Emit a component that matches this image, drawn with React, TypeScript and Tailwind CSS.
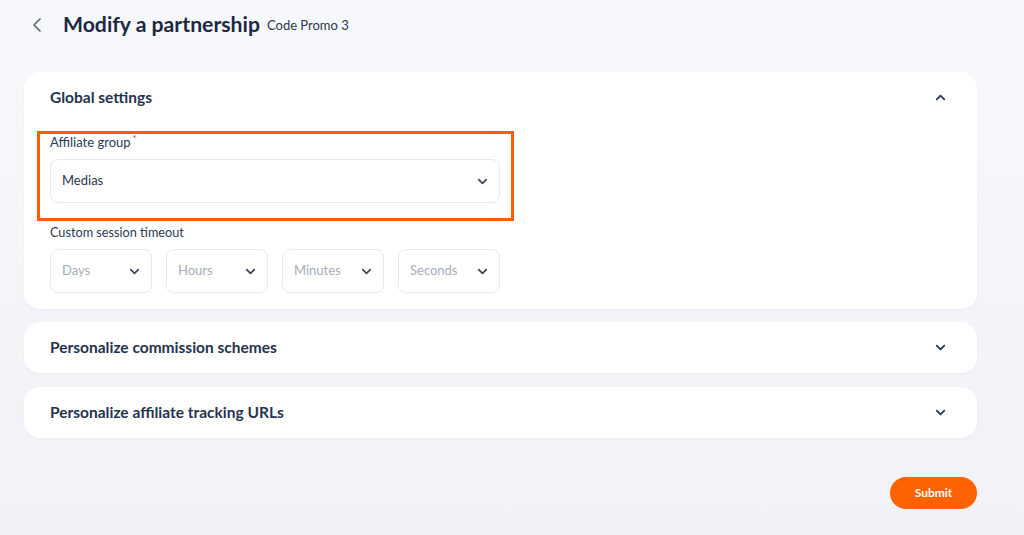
import { ChevronDown, ChevronLeft, ChevronUp } from "lucide-react";

const units = ["Days", "Hours", "Minutes", "Seconds"];

function CollapsedCard({ title }: { title: string }) {
  return (
    <div className="flex h-[51px] items-center justify-between rounded-2xl bg-white pl-[26px] pr-[29px] shadow-[0_1px_3px_rgba(30,42,70,0.04)]">
      <h2 className="text-[15.5px] font-bold text-[#25334d]">{title}</h2>
      <ChevronDown className="h-[15px] w-[15px] text-[#2d3b52]" strokeWidth={3} />
    </div>
  );
}

export default function App() {
  return (
    <div
      className="min-h-[535px] w-full bg-[linear-gradient(180deg,#f7f8fb_0%,#f0f2f7_100%)] text-[#25334d]"
      style={{ fontFamily: "Lato, 'Open Sans', sans-serif" }}
    >
      <div className="w-[953px] pl-[24px] box-content">
        {/* header */}
        <div className="flex h-[48px] items-center pt-[1px]">
          <ChevronLeft className="ml-[1px] h-[24px] w-[24px] text-[#5b6577]" strokeWidth={1.75} />
          <h1 className="ml-[14px] text-[21.2px] font-bold text-[#1c2844]">
            Modify a partnership
          </h1>
          <span className="ml-[7px] mt-[3px] text-[13px] text-[#2b3750]">Code Promo 3</span>
        </div>

        {/* global settings */}
        <div className="mt-[24px] rounded-2xl bg-white shadow-[0_1px_3px_rgba(30,42,70,0.04)]">
          <div className="flex h-[51px] items-center justify-between pl-[26px] pr-[29px]">
            <h2 className="text-[15.5px] font-bold text-[#25334d]">Global settings</h2>
            <ChevronUp className="h-[15px] w-[15px] text-[#2d3b52]" strokeWidth={3} />
          </div>

          <div className="relative px-[26px] pb-[16px] pt-[11px]">
            <div className="absolute left-[13px] top-[8px] h-[90px] w-[477px] border-[3px] border-[#ff5a0a]" />

            <label className="flex text-[13px] leading-[16px] text-[#2b3a55]">
              Affiliate group
              <span className="ml-[2px] -mt-[4px] text-[10px] text-[#e0313b]">*</span>
            </label>
            <div className="mt-[9px] flex h-[44px] w-[450px] items-center justify-between rounded-lg border border-[#e6e9ee] bg-white pl-[11px] pr-[9px]">
              <span className="text-[13px] text-[#2b3750]">Medias</span>
              <ChevronDown className="h-[15px] w-[15px] text-[#3a4558]" strokeWidth={2.75} />
            </div>

            <div className="mt-[21px] text-[12.7px] leading-[16px] text-[#2b3a55]">
              Custom session timeout
            </div>
            <div className="mt-[9px] flex gap-[14px]">
              {units.map((u) => (
                <div
                  key={u}
                  className="flex h-[44px] w-[102px] items-center justify-between rounded-lg border border-[#e6e9ee] bg-white pl-[11px] pr-[9px]"
                >
                  <span className="text-[13px] text-[#a7adb8]">{u}</span>
                  <ChevronDown className="h-[15px] w-[15px] text-[#3a4558]" strokeWidth={2.75} />
                </div>
              ))}
            </div>
          </div>
        </div>

        <div className="mt-[13px]">
          <CollapsedCard title="Personalize commission schemes" />
        </div>
        <div className="mt-[14px]">
          <CollapsedCard title="Personalize affiliate tracking URLs" />
        </div>

        <div className="mt-[39px] flex justify-end">
          <button className="h-[32px] w-[87px] rounded-full bg-[#ff6200] text-[12px] font-bold text-white">
            Submit
          </button>
        </div>
      </div>
    </div>
  );
}
